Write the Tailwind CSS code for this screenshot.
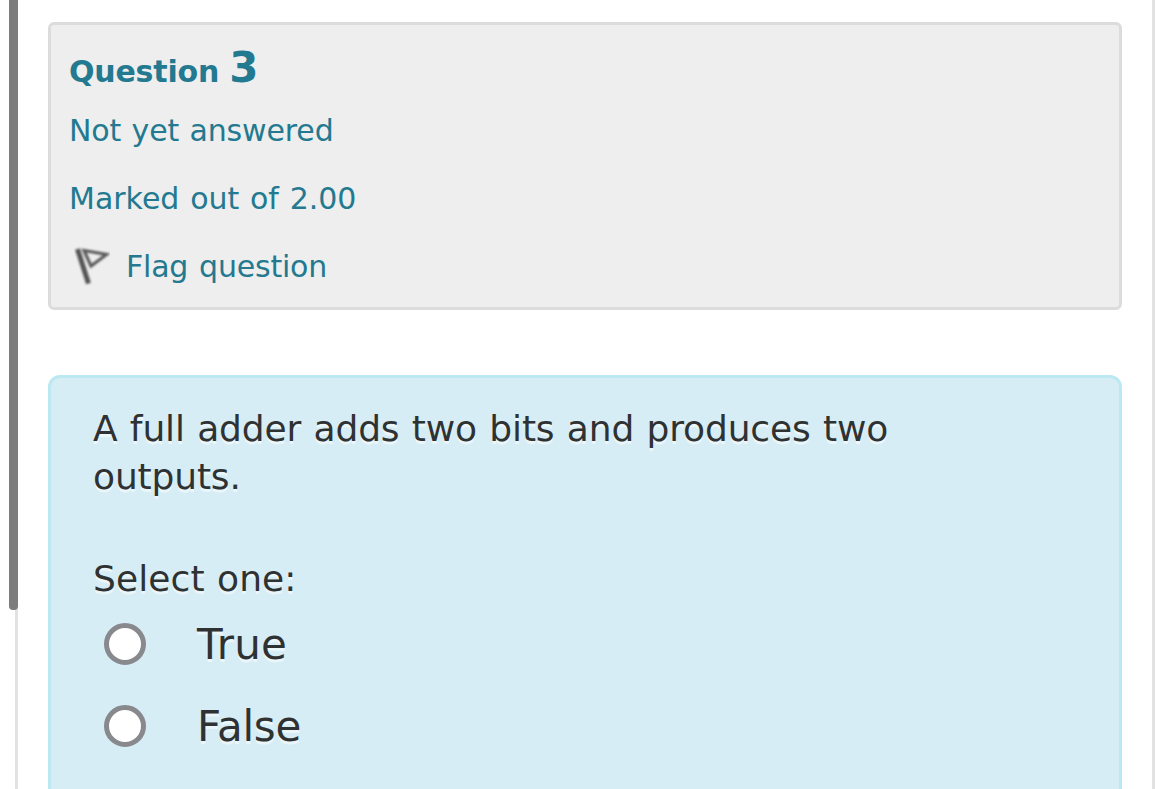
<!DOCTYPE html>
<html lang="en">
<head>
    <meta charset="UTF-8">
    <meta name="viewport" content="width=device-width, initial-scale=1.0">
    <title>Quiz - Question 3</title>
    <script src="https://cdn.jsdelivr.net/npm/@tailwindcss/browser@4"></script>
</head>
<body class="relative bg-white h-screen overflow-hidden font-['DejaVu_Sans',sans-serif]">
    <!-- Scroll thumb -->
    <div class="absolute left-[9px] top-0 w-[9px] h-[610px] bg-[#7d7d7d] rounded-b-[4px]"></div>

    <main class="ml-[15px] w-[1140px] h-full border-x-3 border-[#e2e2e2] px-[30px] pt-[22px] overflow-hidden">
        <!-- Question info -->
        <section class="h-[288px] bg-[#eeeeee] border-3 border-[#dcdcdc] rounded-[6px] pl-[18px] pt-[19px] text-[30px] leading-[36px] text-[#23798f]">
            <h3 class="h-12 leading-[48px] font-bold whitespace-nowrap tracking-[-0.2px]"><span class="text-[30px]">Question</span> <span class="text-[42px]">3</span></h3>
            <div class="mt-[21px] tracking-[-0.14px] [word-spacing:1px]">Not yet answered</div>
            <div class="mt-8 [word-spacing:1.2px]">Marked out of 2.00</div>
            <div class="mt-8 flex items-center">
                <svg class="w-[48px] h-[48px] -my-1.5 shrink-0" viewBox="0 0 48 48" fill="none">
                    <filter id="soft" x="-10%" y="-10%" width="120%" height="120%"><feGaussianBlur stdDeviation="0.9"/></filter>
                    <g filter="url(#soft)">
                        <path d="M8.5 6 L19.5 40.5" stroke="#555555" stroke-width="5"/>
                        <path d="M15 7.5 L37.5 11.5 L22 23 Z" stroke="#5c5c5c" stroke-width="3.2"/>
                    </g>
                </svg>
                <a href="#" class="ml-[9px] tracking-[-0.2px] [word-spacing:1.5px]">Flag question</a>
            </div>
        </section>

        <!-- Question body -->
        <section class="mt-[65px] h-[500px] bg-[#d7edf5] border-3 border-[#bce8f1] rounded-[12px] pl-[42px] pt-[27px] text-[36px] leading-[48px] text-[#2f3233] text-shadow-[0_3px_0_rgba(255,255,255,0.5)]">
            <p class="w-[860px] tracking-[-0.15px] [word-spacing:1.1px]">A full adder adds two bits and produces two outputs.</p>
            <form class="mt-[54px]">
                <div class="tracking-[0.1px] [word-spacing:0.8px]">Select one:</div>
                <div class="mt-[15px] ml-[11px] flex flex-col gap-7 text-[42px] leading-[54px]">
                    <label class="flex items-center">
                        <input type="radio" name="answer" value="1" class="appearance-none size-[42px] -mt-[2px] rounded-full border-5 border-[#87898d] bg-white">
                        <span class="ml-[51px] tracking-[0.2px]">True</span>
                    </label>
                    <label class="flex items-center">
                        <input type="radio" name="answer" value="0" class="appearance-none size-[42px] -mt-[2px] rounded-full border-5 border-[#87898d] bg-white">
                        <span class="ml-[51px] tracking-[-0.3px]">False</span>
                    </label>
                </div>
            </form>
        </section>
    </main>
</body>
</html>
